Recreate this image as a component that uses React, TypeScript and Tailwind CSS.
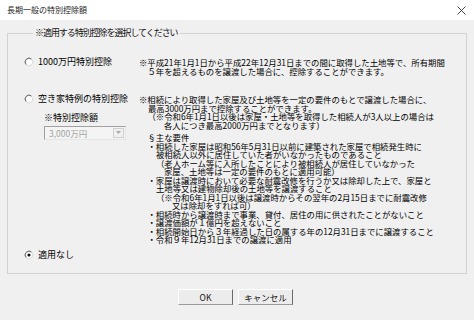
import React from 'react';

function Radio({ checked = false }: { checked?: boolean }) {
  return (
    <svg width="10" height="10" viewBox="0 0 10 10" className="shrink-0">
      <circle cx="5" cy="5" r="3.8" fill="#ffffff" />
      <path d="M2.3 7.7A3.8 3.8 0 0 1 7.7 2.3" fill="none" stroke="#555555" strokeWidth="1" />
      <path d="M7.7 2.3A3.8 3.8 0 0 1 2.3 7.7" fill="none" stroke="#d8d8d8" strokeWidth="1" />
      {checked && <circle cx="5" cy="5" r="1.6" fill="#111111" />}
    </svg>
  );
}

const block1: [string, string][] = [
  ['', '※平成21年1月1日から平成22年12月31日までの間に取得した土地等で、所有期間'],
  ['pl-[8.4px]', '５年を超えるものを譲渡した場合に、控除することができます。'],
];

const block2: [string, string][] = [
  ['', '※相続により取得した家屋及び土地等を一定の要件のもとで譲渡した場合に、'],
  ['pl-[9px]', '最高3000万円まで控除することができます。'],
  ['pl-[8.4px]', '（※令和6年1月1日以後は家屋・土地等を取得した相続人が3人以上の場合は'],
  ['pl-[25px]', '各人につき最高2000万円までとなります）'],
];

const block3: [string, string][] = [
  ['pl-[8.4px]', '§主な要件'],
  ['pl-[8.4px]', '・相続した家屋は昭和56年5月31日以前に建築された家屋で相続発生時に'],
  ['pl-[17px]', '被相続人以外に居住していた者がいなかったものであること'],
  ['pl-[17px]', '（老人ホーム等に入所したことにより被相続人が居住していなかった'],
  ['pl-[25px]', '家屋、土地等は一定の要件のもとに適用可能）'],
  ['pl-[8.4px]', '・家屋は譲渡時において必要な耐震改修を行うか又は除却した上で、家屋と'],
  ['pl-[17px]', '土地等又は建物除却後の土地等を譲渡すること'],
  ['pl-[17px]', '（※令和6年1月1日以後は譲渡時からその翌年の2月15日までに耐震改修'],
  ['pl-[33px]', '又は除却をすれば可）'],
  ['pl-[8.4px]', '・相続時から譲渡時まで事業、貸付、居住の用に供されたことがないこと'],
  ['pl-[8.4px]', '・譲渡価額が１億円を超えないこと'],
  ['pl-[8.4px]', '・相続開始日から３年経過した日の属する年の12月31日までに譲渡すること'],
  ['pl-[8.4px]', '・令和９年12月31日までの譲渡に適用'],
];

function Lines({ items }: { items: [string, string][] }) {
  return (
    <div className="text-[8.4px] leading-[8.5px] text-black whitespace-nowrap">
      {items.map(([indent, text], i) => (
        <div key={i} className={indent}>
          {text}
        </div>
      ))}
    </div>
  );
}

export default function App() {
  return (
    <div className="w-[474px] h-[320px] overflow-hidden bg-[#f0f0f0] font-['Noto_Sans_CJK_JP',sans-serif] text-black flex flex-col">
      {/* title bar */}
      <div className="h-[20px] bg-white flex items-center justify-between pl-[7px] pr-[8px]">
        <span className="text-[8px] leading-[10px] text-[#222]">長期一般の特別控除額</span>
        <svg width="9" height="9" viewBox="0 0 9 9">
          <path d="M0.5 0.5L8.5 8.5M8.5 0.5L0.5 8.5" stroke="#333" strokeWidth="0.9" />
        </svg>
      </div>

      {/* group box */}
      <fieldset className="mx-[7px] mt-[8px] border border-[#d2d2d2] pl-[16px] pb-[13px]">
        <legend className="ml-[9px] px-[2px] text-[9px] leading-[10px] tracking-[-1.05px] text-[#111]">
          ※適用する特別控除を選択してください
        </legend>

        {/* 1000万円 */}
        <div className="grid grid-cols-[115px_1fr] mt-[20px]">
          <div className="flex items-center gap-[4px] h-[8.5px]">
            <Radio />
            <span className="text-[9px] leading-[8.5px]">1000万円特別控除</span>
          </div>
          <Lines items={block1} />
        </div>

        {/* 空き家特例 */}
        <div className="grid grid-cols-[115px_1fr] mt-[20px]">
          <div className="flex flex-col">
            <div className="flex items-center gap-[4px] h-[8.5px]">
              <Radio />
              <span className="text-[9px] leading-[8.5px]">空き家特例の特別控除</span>
            </div>
            <div className="ml-[20px] mt-[9px] text-[9px] leading-[10px]">※特別控除額</div>
            <div className="ml-[20px] mt-[3px] w-[82px] h-[14px] flex items-stretch border border-t-[#a0a0a0] border-l-[#a0a0a0] border-b-[#e6e6e6] border-r-[#e6e6e6] bg-[#f4f4f4]">
              <span className="flex-1 pl-[4px] text-[8.5px] leading-[12px] text-[#a3a3a3]">3,000万円</span>
              <div className="w-[11px] m-[1px] border border-[#d0d0d0] bg-[#f0f0f0] flex items-center justify-center">
                <svg width="5" height="3" viewBox="0 0 5 3">
                  <path d="M0 0H5L2.5 3Z" fill="#a8a8a8" />
                </svg>
              </div>
            </div>
          </div>
          <div>
            <Lines items={block2} />
            <div className="mt-[4px]">
              <Lines items={block3} />
            </div>
          </div>
        </div>

        {/* 適用なし */}
        <div className="flex items-center gap-[4px] mt-[6px] h-[10px]">
          <Radio checked />
          <span className="text-[9px] leading-[10px]">適用なし</span>
        </div>
      </fieldset>

      {/* buttons */}
      <div className="flex justify-center gap-[5px] mt-[15px] pr-[3px]">
        <button className="w-[55px] h-[16px] bg-[#ececec] border border-t-white border-l-white border-r-[#6a6a6a] border-b-[#9a9a9a] text-[8.5px] leading-[14px] text-[#111]">
          OK
        </button>
        <button className="w-[55px] h-[16px] bg-[#ececec] border border-t-white border-l-white border-r-[#6a6a6a] border-b-[#9a9a9a] text-[8.5px] leading-[14px] text-[#111]">
          キャンセル
        </button>
      </div>
    </div>
  );
}
